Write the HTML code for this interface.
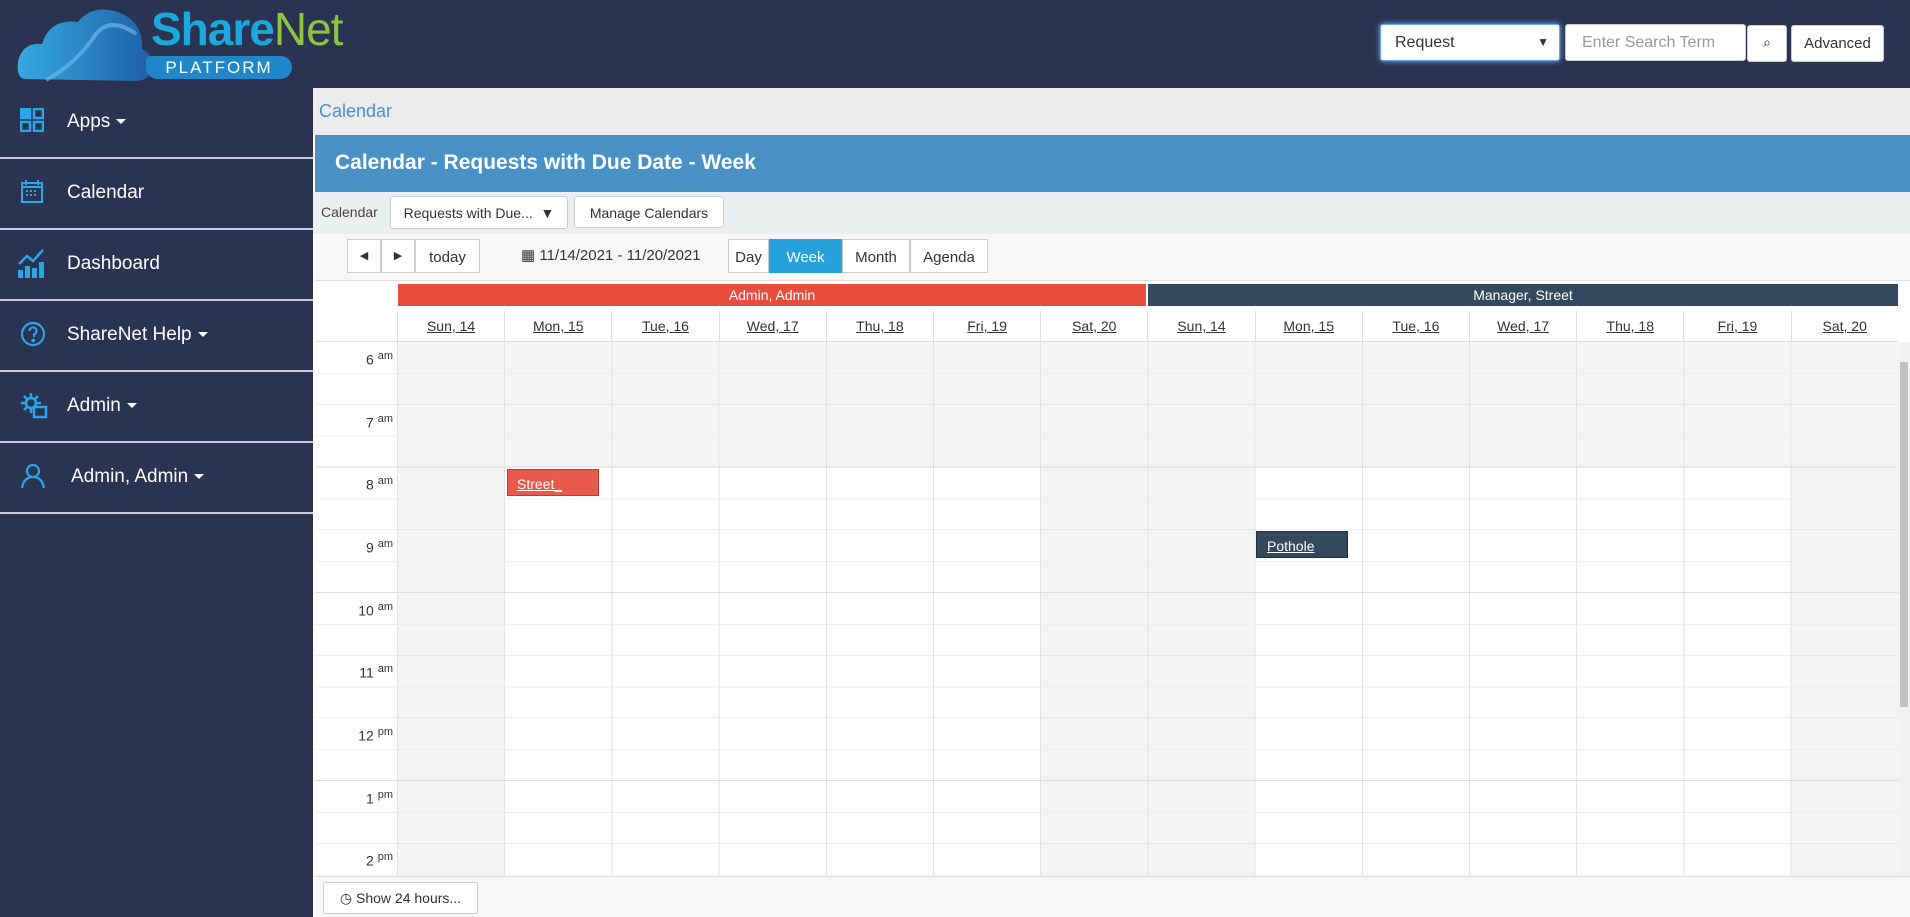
<!DOCTYPE html>
<html><head><meta charset="utf-8"><style>
*{box-sizing:border-box;margin:0;padding:0}
body{width:1910px;height:917px;overflow:hidden;font-family:"Liberation Sans",sans-serif;background:#fff;position:relative;color:#333}
.abs{position:absolute}
#hdr{left:0;top:0;width:1910px;height:88px;background:#2a3352}
#side{left:0;top:88px;width:313px;height:829px;background:#2a3352}
.item{position:absolute;left:0;width:313px;height:71px;border-bottom:2px solid #c9ccd6;color:#fff;font-size:19px}
.item span{position:absolute;left:67px;top:23px}
.item svg{position:absolute;left:20px;top:20px}
.car{display:inline-block;border-left:5px solid transparent;border-right:5px solid transparent;border-top:5px solid #fff;vertical-align:middle;margin-left:6px}
.btn{position:absolute;background:#fff;border:1px solid #ccc;border-radius:3px;font-size:15px;color:#333;text-align:center;white-space:nowrap}
.col{position:absolute;top:0;height:534px;width:107.2px}
.dh{position:absolute;top:311px;height:31px;width:107.2px;border-left:1px solid #ddd;text-align:center;font-size:14px;text-decoration:underline;line-height:31px;color:#333}
.tl{position:absolute;left:0;width:78px;text-align:right;font-size:14px;color:#333}
.tl sup{font-size:11px}
</style></head><body>
<div id="hdr" class="abs">
 <svg class="abs" style="left:16px;top:4px" width="140" height="78" viewBox="0 0 140 78">
  <defs><linearGradient id="g" x1="0" x2="1"><stop offset="0" stop-color="#35a9e0"/><stop offset="1" stop-color="#1f5fa8"/></linearGradient></defs>
  <path d="M10 75 Q0 75 2 58 Q6 38 26 40 Q34 14 62 18 Q76 0 102 8 Q128 18 126 45 Q140 52 134 70 Q130 77 118 77 Z" fill="url(#g)"/>
  <path d="M30 76 Q60 60 80 30 Q95 12 120 30" stroke="#6fc3ef" stroke-width="4" fill="none" opacity=".6"/>
 </svg>
 <div class="abs" style="left:151px;top:2px;font-size:46px;font-weight:bold;color:#1ba8dc;letter-spacing:-1px">Share<span style="color:#8cc63f;font-weight:normal">Net</span></div>
 <div class="abs" style="left:146px;top:56px;width:146px;height:23px;background:#1f86c9;border-radius:4px 12px 12px 12px;color:#fff;font-size:17px;letter-spacing:2px;text-align:center;line-height:23px">PLATFORM</div>
 <div class="btn" style="left:1380px;top:24px;width:180px;height:37px;border:1px solid #6aa7e0;box-shadow:0 0 6px #7bb8ff;text-align:left;padding:9px 14px;font-size:16px">Request<span style="position:absolute;right:10px;top:10px;font-size:12px">▼</span></div>
 <div class="btn" style="left:1565px;top:24px;width:181px;height:37px;text-align:left;padding:9px 16px;font-size:16px;color:#999">Enter Search Term</div>
 <div class="btn" style="left:1747px;top:25px;width:40px;height:37px;padding-top:8px;font-size:14px">⌕</div>
 <div class="btn" style="left:1791px;top:25px;width:93px;height:37px;padding-top:9px">Advanced</div>
</div>
<div id="side" class="abs">
 <div class="item" style="top:0"><svg width="24" height="24" viewBox="0 0 24 24" fill="none" stroke="#2aa7e6" stroke-width="2.5"><rect x="1" y="1" width="9" height="9" fill="#2aa7e6"/><rect x="14" y="1" width="9" height="9"/><rect x="1" y="14" width="9" height="9"/><rect x="14" y="14" width="9" height="9"/></svg><span>Apps<i class="car"></i></span></div>
 <div class="item" style="top:71px"><svg width="24" height="24" viewBox="0 0 24 24" fill="none" stroke="#2aa7e6" stroke-width="2"><rect x="2" y="4" width="20" height="19"/><path d="M6 1v5M18 1v5M2 8h20M6 12h2M10 12h2M14 12h2M6 16h2M10 16h2M14 16h2"/></svg><span>Calendar</span></div>
 <div class="item" style="top:142px"><svg width="30" height="30" viewBox="0 0 30 30" fill="#2aa7e6" style="left:17px;top:18px"><rect x="1" y="22" width="5" height="8"/><rect x="8" y="18" width="5" height="12"/><rect x="15" y="20" width="5" height="10"/><rect x="22" y="14" width="5" height="16"/><path d="M2 16l8-8 6 5 10-11" stroke="#2aa7e6" stroke-width="2.5" fill="none"/></svg><span>Dashboard</span></div>
 <div class="item" style="top:213px"><svg width="26" height="26" viewBox="0 0 26 26" fill="none" stroke="#2aa7e6" stroke-width="2.2"><circle cx="13" cy="13" r="11"/><path d="M9.5 10a3.5 3.5 0 1 1 4.5 3.3V16"/><circle cx="13.2" cy="19.5" r=".8" fill="#2aa7e6"/></svg><span>ShareNet Help<i class="car"></i></span></div>
 <div class="item" style="top:284px"><svg width="28" height="28" viewBox="0 0 28 28" fill="none" stroke="#2aa7e6" stroke-width="2.5"><circle cx="11" cy="11" r="5"/><path d="M11 1v4M11 17v4M1 11h4M17 11h4M4 4l3 3M15 15l3 3M18 4l-3 3M4 18l3-3"/><rect x="14" y="15" width="12" height="10" fill="#2a3352"/></svg><span>Admin<i class="car"></i></span></div>
 <div class="item" style="top:355px"><svg width="26" height="26" viewBox="0 0 26 26" fill="none" stroke="#2aa7e6" stroke-width="2.2"><circle cx="13" cy="8" r="6"/><path d="M2 25q2-11 11-11t11 11"/></svg><span style="left:71px">Admin, Admin<i class="car"></i></span></div>
</div>
<div class="abs" style="left:313px;top:88px;width:1597px;height:47px;background:#ececec"><span class="abs" style="left:6px;top:13px;color:#4a8fd0;font-size:18px">Calendar</span></div>
<div class="abs" style="left:315px;top:135px;width:1595px;height:57px;background:#4a92c6;color:#fff;font-weight:bold;font-size:21px;padding:16px 20px">Calendar - Requests with Due Date - Week</div>
<div class="abs" style="left:313px;top:192px;width:1597px;height:42px;background:#eceff0">
 <span class="abs" style="left:8px;top:12px;font-size:14px;color:#444">Calendar</span>
 <div class="btn" style="left:77px;top:4px;width:178px;height:33px;padding-top:8px;font-size:14px">Requests with Due... &nbsp;▼</div>
 <div class="btn" style="left:261px;top:4px;width:150px;height:32px;padding-top:8px;font-size:14px">Manage Calendars</div>
</div>
<div class="abs" style="left:315px;top:234px;width:1595px;height:47px;background:#f7f7f7;border-bottom:1px solid #ddd">
 <div class="btn" style="left:32px;top:5px;width:34px;height:34px;border-radius:0;padding-top:9px;font-size:11px">◀</div>
 <div class="btn" style="left:66px;top:5px;width:34px;height:34px;border-radius:0;padding-top:9px;font-size:11px">▶</div>
 <div class="btn" style="left:100px;top:5px;width:65px;height:34px;border-radius:0;padding-top:9px;font-size:15px">today</div>
 <span class="abs" style="left:206px;top:12px;font-size:15px">▦ 11/14/2021 - 11/20/2021</span>
 <div class="btn" style="left:413px;top:5px;width:41px;height:34px;border-radius:0;padding-top:9px">Day</div>
 <div class="btn" style="left:454px;top:5px;width:73px;height:34px;border-radius:0;padding-top:9px;background:#27a1dc;color:#fff;border-color:#27a1dc">Week</div>
 <div class="btn" style="left:527px;top:5px;width:68px;height:34px;border-radius:0;padding-top:9px">Month</div>
 <div class="btn" style="left:595px;top:5px;width:78px;height:34px;border-radius:0;padding-top:9px">Agenda</div>
</div>
<div class="abs" style="left:398px;top:284px;width:748px;height:22px;background:#e74c3c;color:#fff;font-size:14px;text-align:center;line-height:22px">Admin, Admin</div>
<div class="abs" style="left:1148px;top:284px;width:750px;height:22px;background:#34495e;color:#fff;font-size:14px;text-align:center;line-height:22px">Manager, Street</div>
<div class="abs" style="left:315px;top:341px;width:1583px;height:1px;background:#ddd"></div>
<div class="dh" style="left:397px">Sun, 14</div><div class="dh" style="left:504.2px">Mon, 15</div><div class="dh" style="left:611.4px">Tue, 16</div><div class="dh" style="left:718.6px">Wed, 17</div><div class="dh" style="left:825.8px">Thu, 18</div><div class="dh" style="left:933px">Fri, 19</div><div class="dh" style="left:1040.2px">Sat, 20</div>
<div class="dh" style="left:1147.4px">Sun, 14</div><div class="dh" style="left:1254.6px">Mon, 15</div><div class="dh" style="left:1361.8px">Tue, 16</div><div class="dh" style="left:1469px">Wed, 17</div><div class="dh" style="left:1576.2px">Thu, 18</div><div class="dh" style="left:1683.4px">Fri, 19</div><div class="dh" style="left:1790.6px">Sat, 20</div>
<div class="abs" style="left:315px;top:342px;width:1583px;height:534px;overflow:hidden">
 <div class="abs" style="left:82px;top:0;width:1501px;height:534px">
  <div class="col" style="left:0;background:#f4f4f4"></div><div class="col" style="left:643.2px;background:#f4f4f4"></div>
  <div class="col" style="left:750.4px;background:#f4f4f4"></div><div class="col" style="left:1393.6px;background:#f4f4f4"></div>
  <div class="abs" style="left:0;top:0;width:1501px;height:125px;background:#f4f4f4"></div>
  <div class="abs" style="left:0;top:0;width:1501px;height:534px;background:repeating-linear-gradient(to right,#e2e2e2 0,#e2e2e2 1px,transparent 1px,transparent 107.2px)"></div>
 </div>
 <div class="abs" style="left:0;top:0;width:1583px;height:534px;background:repeating-linear-gradient(to bottom,transparent 0,transparent 31px,#eee 31px,#eee 32px,transparent 32px,transparent 62px,#ddd 62px,#ddd 62.7px)"></div>
 <div class="tl" style="top:8px">6 <sup>am</sup></div><div class="tl" style="top:71px">7 <sup>am</sup></div><div class="tl" style="top:133px">8 <sup>am</sup></div><div class="tl" style="top:196px">9 <sup>am</sup></div><div class="tl" style="top:259px">10 <sup>am</sup></div><div class="tl" style="top:321px">11 <sup>am</sup></div><div class="tl" style="top:384px">12 <sup>pm</sup></div><div class="tl" style="top:447px">1 <sup>pm</sup></div><div class="tl" style="top:509px">2 <sup>pm</sup></div>
</div>
<div class="abs" style="left:507px;top:469px;width:92px;height:27px;background:#e85a4b;border:1px solid #c0392b;color:#fff;font-size:14px;padding:6px 9px"><u>Street_</u></div>
<div class="abs" style="left:1256px;top:531px;width:92px;height:27px;background:#34495e;border:1px solid #22303e;color:#fff;font-size:14px;padding:6px 10px"><u>Pothole</u></div>
<div class="abs" style="left:1898px;top:342px;width:12px;height:534px;background:#f1f1f1"><div class="abs" style="left:2px;top:20px;width:8px;height:345px;background:#c1c1c1"></div></div>
<div class="abs" style="left:315px;top:876px;width:1595px;height:41px;background:#f7f7f7;border-top:1px solid #ddd">
 <div class="btn" style="left:8px;top:5px;width:155px;height:32px;padding-top:7px;font-size:14px">◷ Show 24 hours...</div>
</div>
</body></html>
